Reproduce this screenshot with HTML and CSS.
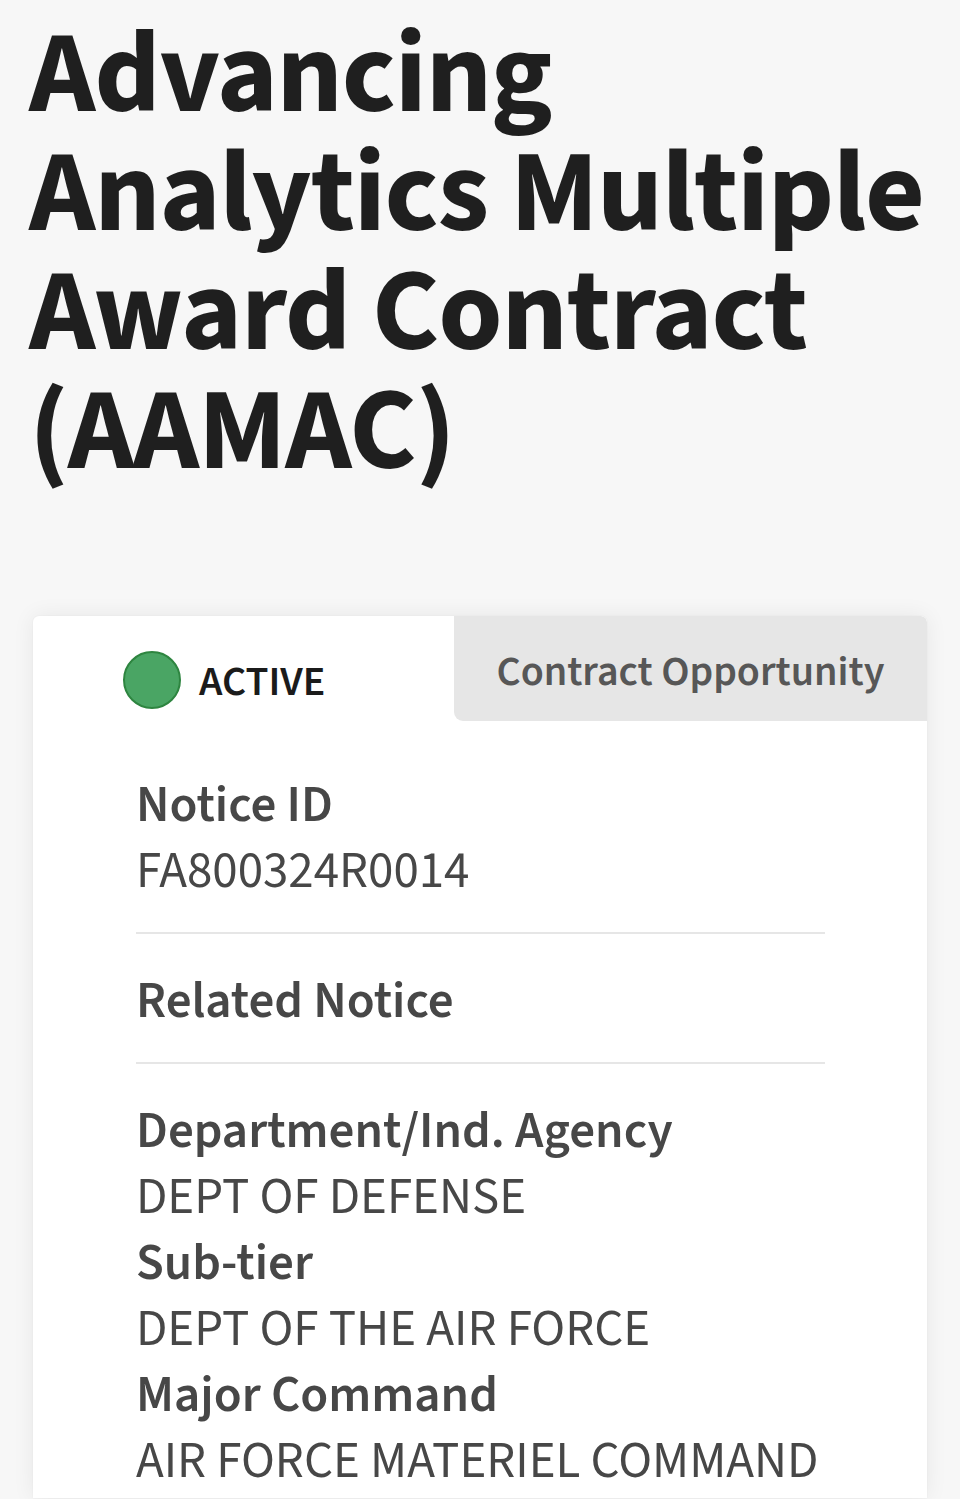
FILE: index.html
```html
<!DOCTYPE html>
<html lang="en">
<head>
<meta charset="utf-8">
<title>Advancing Analytics Multiple Award Contract (AAMAC)</title>
<link rel="stylesheet" href="styles.css">
</head>
<body>
<main class="page">
  <h1 class="title">Advancing Analytics Multiple Award Contract (AAMAC)</h1>
  <section class="card">
    <div class="tabs">
      <div class="tab tab-status">
        <span class="dot"></span>
        <span class="status">ACTIVE</span>
      </div>
      <div class="tab tab-type">Contract Opportunity</div>
    </div>
    <div class="details">
      <div class="group">
        <div class="label">Notice ID</div>
        <div class="value">FA800324R0014</div>
      </div>
      <div class="group">
        <div class="label">Related Notice</div>
      </div>
      <div class="group">
        <div class="label">Department/Ind. Agency</div>
        <div class="value">DEPT OF DEFENSE</div>
        <div class="label">Sub-tier</div>
        <div class="value">DEPT OF THE AIR FORCE</div>
        <div class="label">Major Command</div>
        <div class="value">AIR FORCE MATERIEL COMMAND</div>
      </div>
    </div>
  </section>
</main>
</body>
</html>
```
FILE: styles.css
```css
html, body {
  margin: 0;
  padding: 0;
  background: #f7f7f7;
}

body {
  font-family: "Source Sans 3", "Source Sans Pro", "Roboto Condensed", "Liberation Sans", sans-serif;
  color: #1b1b1b;
  height: 1499px;
  overflow: hidden;
}

.page {
  padding: 15px 0 0 0;
}

.title {
  margin: 0 20px 0 29px;
  font-size: 116px;
  line-height: 119px;
  font-weight: 700;
  letter-spacing: -1.2px;
  color: #1f1f1f;
}

.card {
  margin: 125px 33px 0 33px;
  background: #fff;
  border-radius: 6px 6px 0 0;
  box-shadow: 0 0 22px rgba(0, 0, 0, 0.07), 0 0 2px rgba(0, 0, 0, 0.05);
  height: 882px;
  overflow: hidden;
}

.tabs {
  display: flex;
  height: 105px;
}

.tab {
  display: flex;
  align-items: center;
  box-sizing: border-box;
}

.tab-status {
  width: 421px;
  padding: 23px 0 0 90px;
  gap: 18px;
}

.dot {
  width: 54px;
  height: 54px;
  border-radius: 50%;
  background: #4aa564;
  border: 2px solid #2e8540;
  flex: none;
}

.status {
  font-size: 42px;
  font-weight: 600;
  color: #1b1b1b;
  padding-top: 3px;
}

.tab-type {
  flex: 1;
  justify-content: center;
  background: #e6e6e6;
  border-radius: 0 6px 0 9px;
  font-size: 42px;
  font-weight: 600;
  color: #575757;
  padding: 6px 0 0 0;
}

.details {
  padding: 51px 102px 0 103px;
}

.group {
  padding: 34px 0 28px;
  border-bottom: 2px solid #e6e6e6;
}

.group:first-child {
  padding-top: 0;
}

.group:last-child {
  border-bottom: none;
}

.label,
.value {
  font-size: 51px;
  line-height: 66px;
  color: #474747;
  white-space: nowrap;
}

.label {
  font-weight: 600;
}

.value {
  font-weight: 400;
}
```
